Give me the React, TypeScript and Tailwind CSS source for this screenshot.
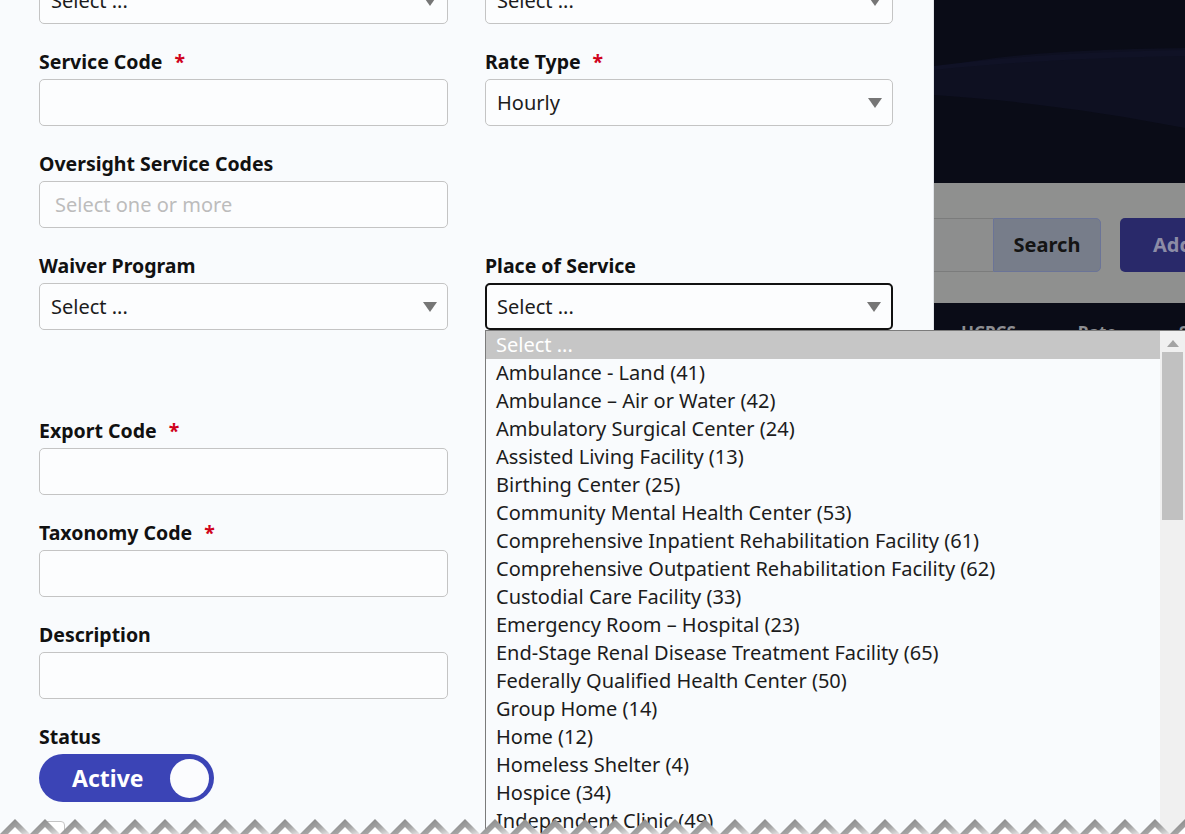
import React from 'react';

const options = [
  'Ambulance - Land (41)',
  'Ambulance – Air or Water (42)',
  'Ambulatory Surgical Center (24)',
  'Assisted Living Facility (13)',
  'Birthing Center (25)',
  'Community Mental Health Center (53)',
  'Comprehensive Inpatient Rehabilitation Facility (61)',
  'Comprehensive Outpatient Rehabilitation Facility (62)',
  'Custodial Care Facility (33)',
  'Emergency Room – Hospital (23)',
  'End-Stage Renal Disease Treatment Facility (65)',
  'Federally Qualified Health Center (50)',
  'Group Home (14)',
  'Home (12)',
  'Homeless Shelter (4)',
  'Hospice (34)',
  'Independent Clinic (49)',
  'Indian Health Service Free-standing Facility (05)',
];

const Caret = () => (
  <svg width="14" height="10" viewBox="0 0 14 10" className="absolute right-[10px] top-1/2 -translate-y-1/2">
    <path d="M0 0 H14 L7 10 Z" fill="#767676" />
  </svg>
);

const Label = ({ text, required }: { text: string; required?: boolean }) => (
  <div className="h-[28px] mb-[4px] pt-[2px] flex items-center text-[19.5px] font-bold text-[#111]">
    {text}
    {required && <span className="ml-[12px] text-[#d0021b]">*</span>}
  </div>
);

const TextInput = ({ placeholder }: { placeholder?: string }) => (
  <div className="h-[47px] rounded-[5px] border border-[#c4c4c4] bg-[#fcfdfe] flex items-center px-[15px] text-[20px] text-[#bcbcbc]">
    {placeholder}
  </div>
);

const Select = ({ value, focused }: { value: string; focused?: boolean }) => (
  <div
    className={`relative h-[47px] rounded-[5px] bg-[#fcfdfe] flex items-center text-[20px] text-[#1c1c1c] ${
      focused ? 'border-2 border-[#111] px-[10px]' : 'border border-[#c4c4c4] px-[11px]'
    }`}
  >
    {value}
    <Caret />
  </div>
);

const Field = ({ label, required, children }: { label?: string; required?: boolean; children?: React.ReactNode }) => (
  <div>
    {label && <Label text={label} required={required} />}
    {children}
  </div>
);

export default function App() {
  return (
    <div className="relative w-[1185px] h-[834px] overflow-hidden flex" style={{ fontFamily: '"Noto Sans", "Open Sans", sans-serif' }}>
      {/* Drawer form */}
      <div className="w-[934px] shrink-0 bg-[#f9fbfd] pl-[39px] border-r border-[#e3e6ea]">
        <div className="-mt-[23px] grid grid-cols-[409px_408px] gap-x-[37px] gap-y-[23px]">
          <Select value="Select ..." />
          <Select value="Select ..." />

          <Field label="Service Code" required>
            <TextInput />
          </Field>
          <Field label="Rate Type" required>
            <Select value="Hourly" />
          </Field>

          <Field label="Oversight Service Codes">
            <TextInput placeholder="Select one or more" />
          </Field>
          <div />

          <Field label="Waiver Program">
            <Select value="Select ..." />
          </Field>
          <Field label="Place of Service">
            <Select value="Select ..." focused />
          </Field>

          <div className="col-span-2 h-[40px]" />

          <Field label="Export Code" required>
            <TextInput />
          </Field>
          <div />

          <Field label="Taxonomy Code" required>
            <TextInput />
          </Field>
          <div />

          <Field label="Description">
            <TextInput />
          </Field>
          <div />

          <Field label="Status">
            <div className="w-[175px] h-[48px] rounded-full bg-[#3b44b6] flex items-center justify-between pl-[33px] pr-[5px]">
              <span className="text-[23px] font-bold text-white">Active</span>
              <span className="w-[39px] h-[39px] rounded-full bg-[#fbfcfe]" />
            </div>
            <div className="mt-[19px] ml-[4px] w-[22px] h-[22px] rounded-[4px] border border-[#c4c4c4] bg-white" />
          </Field>
        </div>
      </div>

      {/* Dimmed page behind */}
      <div className="flex-1 flex flex-col">
        <div className="relative h-[183px] bg-[#0a0c17] overflow-hidden">
          <svg className="absolute inset-0" width="251" height="183" viewBox="0 0 251 183" preserveAspectRatio="none">
            <path d="M0 68 C60 56 120 50 251 48 L251 128 C170 112 80 100 0 95 Z" fill="#0e1021" />
            <path d="M0 66 C80 56 150 52 251 50 L251 56 C150 58 80 62 0 70 Z" fill="#101226" />
          </svg>
        </div>
        <div className="h-[120px] bg-[#8f908f] flex items-start pt-[35px]">
          <div className="h-[54px] w-[59px] bg-[#8d8e8e] border-y border-[#7b7c7c]" />
          <div className="h-[54px] w-[108px] rounded-r-[5px] bg-[#777d8a] border border-[#6b7497] flex items-center justify-center text-[20px] font-bold text-[#141414]">
            Search
          </div>
          <div className="ml-[19px] h-[54px] flex-1 rounded-l-[5px] bg-[#29296a] flex items-center pl-[33px] text-[20px] font-bold text-[#8c8ca6]">
            Add
          </div>
        </div>
        <div className="flex-1 bg-[#0a0c17] flex items-start pt-[17px] pl-[27px] text-[17px] font-bold text-[#8d8e92] gap-[62px]">
          <span>HCPCS</span>
          <span>Rate</span>
          <span>S</span>
        </div>
      </div>

      {/* Open option list */}
      <div className="absolute left-[485px] top-[330px] w-[701px] h-[520px] bg-[#f9fbfd] border border-[#7b7b7b] flex">
        <div className="flex-1 overflow-hidden">
          <div className="h-[28px] bg-[#c6c6c6] text-white text-[20px] leading-[28px] pl-[10px]">Select ...</div>
          {options.map((o) => (
            <div key={o} className="h-[28px] text-[20px] leading-[28px] pl-[10px] text-[#1c1c1c] whitespace-nowrap">
              {o}
            </div>
          ))}
        </div>
        <div className="w-[25px] bg-[#f0f0f0] flex flex-col items-center">
          <svg width="12" height="7" viewBox="0 0 12 7" className="mt-[9px]">
            <path d="M0 7 L6 0 L12 7 Z" fill="#a3a3a3" />
          </svg>
          <div className="mt-[5px] w-[21px] h-[168px] bg-[#c1c1c1]" />
        </div>
      </div>

      {/* Torn screenshot edge */}
      <svg className="absolute left-0 bottom-0" width="1185" height="16" viewBox="0 0 1185 16">
        <defs>
          <linearGradient id="tear" x1="0" y1="0" x2="1" y2="1">
            <stop offset="0" stopColor="#7c7c7c" />
            <stop offset="0.6" stopColor="#a6a6a6" />
            <stop offset="1" stopColor="#e6e6e6" />
          </linearGradient>
          <pattern id="zig" width="30" height="16" patternUnits="userSpaceOnUse" x="0">
            <path d="M0 16 L15 1 L30 16 Z" fill="url(#tear)" />
            <path d="M8 16 L15 9 L22 16 Z" fill="#ffffff" />
          </pattern>
        </defs>
        <rect width="1185" height="16" fill="url(#zig)" />
      </svg>
    </div>
  );
}
